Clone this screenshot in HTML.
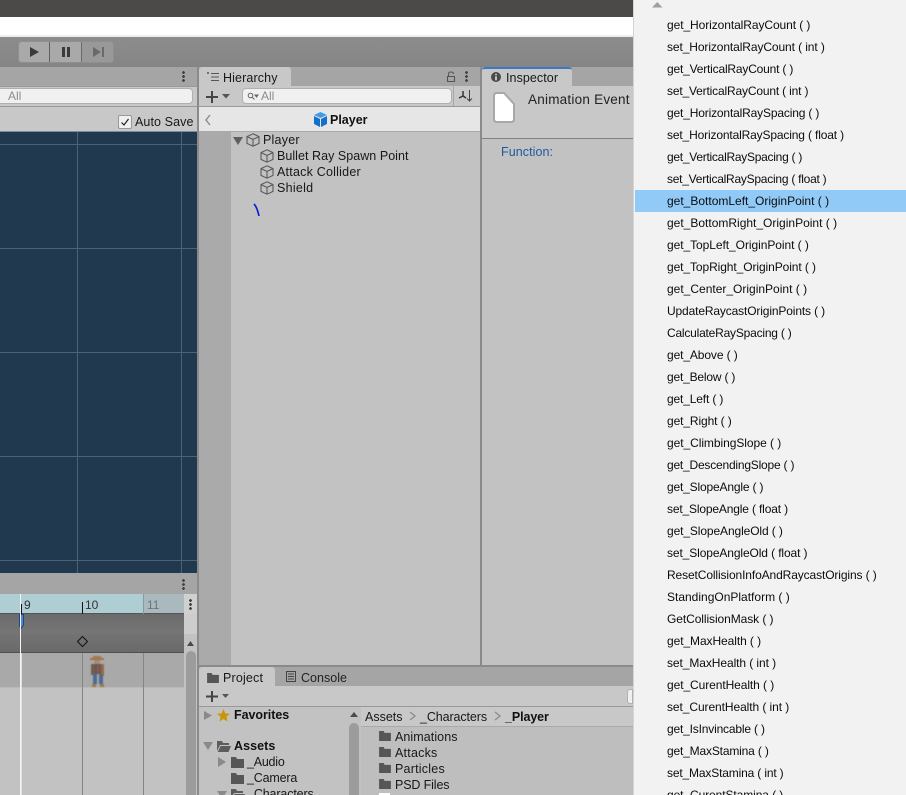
<!DOCTYPE html>
<html><head><meta charset="utf-8"><style>
html,body{margin:0;padding:0;width:906px;height:795px;overflow:hidden;background:#c2c2c2}
#r{position:relative;width:906px;height:795px;overflow:hidden;font-family:"Liberation Sans",sans-serif;font-size:12px;color:#1a1a1a}
.b{position:absolute}
.t{position:absolute;line-height:16px;height:16px;white-space:nowrap;font-size:12.5px;letter-spacing:.1px;color:#181818}
.m{position:absolute;left:667px;line-height:22px;height:22px;white-space:nowrap;color:#0c0c0c;letter-spacing:-.1px}
svg{position:absolute;overflow:visible}
</style></head><body><div id="r">
<svg width="0" height="0" style="left:0;top:0"><defs>
<symbol id="cube" viewBox="0 0 14 14"><path d="M7 .8 13 3.600V10.400L7 13.200 1 10.400V3.600ZM1 3.600 7 6.400 13 3.600M7 6.400V13.200" fill="none" stroke="#5a5a5a" stroke-width="1.100"/></symbol>
<symbol id="folder" viewBox="0 0 13 11"><path d="M0 0H5L6 2H13V11H0Z" fill="#565656"/></symbol>
<symbol id="ofolder" viewBox="0 0 14 11"><path d="M0 0H5L6 2H12V4H3L0 10ZM3.500 5H14L11.500 11H.8Z" fill="#5c5c5c"/></symbol>
</defs></svg>

<!-- top -->
<div class="b" style="left:0;top:0;width:906px;height:17px;background:#4b4a48"></div>
<div class="b" style="left:0;top:17px;width:906px;height:18px;background:#fff"></div>
<div class="b" style="left:0;top:35px;width:906px;height:2px;background:#efefef"></div>
<div class="b" style="left:0;top:37px;width:906px;height:30px;background:linear-gradient(#8c8c8c,#858585)"></div>
<!-- play buttons -->
<div class="b" style="left:18px;top:41px;width:96px;height:22px;background:#8f8f8f;border-radius:3px"></div>
<div class="b" style="left:19px;top:42px;width:30px;height:20px;background:#a9a9a9;border-radius:3px 0 0 3px;border-right:1px solid #5f5f5f"></div>
<div class="b" style="left:50px;top:42px;width:31px;height:20px;background:#a9a9a9;border-right:1px solid #6a6a6a"></div>
<div class="b" style="left:82px;top:42px;width:31px;height:20px;background:#999;border-radius:0 3px 3px 0"></div>
<svg style="left:0;top:0" width="120" height="70"><path d="M30 47 39 52 30 57Z" fill="#3a3a3a"/><path d="M62 47h3v10h-3zM67 47h3v10h-3z" fill="#3a3a3a"/><path d="M93 47 101 52 93 57ZM102 47h2v10h-2z" fill="#6a6a6a"/></svg>

<!-- left panel -->
<div class="b" style="left:0;top:67px;width:197px;height:19px;background:#a5a5a5"></div>
<div class="b" style="left:182px;top:71px;width:3px;height:11px;background:radial-gradient(circle at 50% 1.500px,#444 1.300px,transparent 1.500px) 0 0/3px 4px repeat-y"></div>
<div class="b" style="left:0;top:86px;width:197px;height:21px;background:#c8c8c8;border-top:1px solid #999;border-bottom:1px solid #999;box-sizing:border-box"></div>
<div class="b" style="left:-10px;top:88px;width:203px;height:16px;background:#f0f0f0;border:1px solid #b0b0b0;border-radius:4px;box-sizing:border-box"></div>
<div class="t" style="left:8px;top:88px;color:#8c8c8c;font-size:12px;letter-spacing:0">All</div>
<div class="b" style="left:0;top:107px;width:197px;height:25px;background:#c8c8c8"></div>
<div class="b" style="left:118px;top:115px;width:14px;height:14px;background:#f0f0f0;border:1px solid #999;border-radius:2px;box-sizing:border-box"></div>
<svg style="left:118px;top:115px" width="14" height="14"><path d="M3.500 7.500 6 10 10.500 4" fill="none" stroke="#222" stroke-width="1.200"/></svg>
<div class="t" style="left:135px;top:114px;letter-spacing:.1px">Auto Save</div>
<div class="b" style="left:0;top:131px;width:197px;height:442px;background:#20394f"></div>
<div class="b" style="left:0;top:131px;width:197px;height:1px;background:#7f8a94"></div>
<div class="b" style="left:77px;top:132px;width:1px;height:441px;background:#4d6274"></div>
<div class="b" style="left:181px;top:132px;width:1px;height:441px;background:#4d6274"></div>
<div class="b" style="left:0;top:144px;width:197px;height:1px;background:#4d6274"></div>
<div class="b" style="left:0;top:248px;width:197px;height:1px;background:#4d6274"></div>
<div class="b" style="left:0;top:352px;width:197px;height:1px;background:#4d6274"></div>
<div class="b" style="left:0;top:456px;width:197px;height:1px;background:#4d6274"></div>
<div class="b" style="left:0;top:560px;width:197px;height:1px;background:#4d6274"></div>

<!-- animation -->
<div class="b" style="left:0;top:573px;width:197px;height:21px;background:#a5a5a5"></div>
<div class="b" style="left:182px;top:579px;width:3px;height:11px;background:radial-gradient(circle at 50% 1.500px,#444 1.300px,transparent 1.500px) 0 0/3px 4px repeat-y"></div>
<div class="b" style="left:0;top:594px;width:143px;height:20px;background:#afced3"></div>
<div class="b" style="left:143px;top:594px;width:41px;height:20px;background:#a9b9bd"></div>
<div class="b" style="left:184px;top:594px;width:13px;height:20px;background:#d0d0d0"></div>
<div class="b" style="left:189px;top:599px;width:3px;height:11px;background:radial-gradient(circle at 50% 1.500px,#444 1.300px,transparent 1.500px) 0 0/3px 4px repeat-y"></div>
<div class="b" style="left:0;top:613px;width:184px;height:1px;background:#555"></div>
<div class="b" style="left:21px;top:604px;width:1px;height:10px;background:#111"></div>
<div class="b" style="left:82px;top:602px;width:1px;height:12px;background:#111"></div>
<div class="b" style="left:143px;top:594px;width:1px;height:20px;background:#889a9e"></div>
<div class="t" style="left:24px;top:597px;font-size:12px;letter-spacing:0;color:#333">9</div>
<div class="t" style="left:85px;top:597px;font-size:12px;letter-spacing:0;color:#333">10</div>
<div class="t" style="left:147px;top:597px;font-size:12px;letter-spacing:0;color:#6b7578">11</div>
<div class="b" style="left:0;top:614px;width:184px;height:20px;background:linear-gradient(#6b6b6b,#767676)"></div>
<div class="b" style="left:0;top:634px;width:184px;height:18px;background:linear-gradient(#737373,#6a6a6a)"></div>
<div class="b" style="left:0;top:652px;width:184px;height:1px;background:#4f4f4f"></div>
<div class="b" style="left:0;top:653px;width:184px;height:142px;background:#c2c2c2"></div>
<div class="b" style="left:0;top:653px;width:184px;height:35px;background:#a9a9a9;border-bottom:1px solid #b9b9b9;box-sizing:border-box"></div>
<div class="b" style="left:82px;top:653px;width:1px;height:142px;background:#858585"></div>
<div class="b" style="left:143px;top:653px;width:1px;height:142px;background:#858585"></div>
<div class="b" style="left:20px;top:594px;width:1px;height:201px;background:#f5f5f5"></div>
<div class="b" style="left:21px;top:653px;width:1px;height:142px;background:#e0e0e0"></div>
<svg style="left:0;top:610px" width="190" height="50"><path d="M19.500 4.500H23.500V15L21.500 18 19.500 16Z" fill="#3f8be8" stroke="#17305a" stroke-width=".7"/><path d="M20 4H21V20H20Z" fill="#f5f5f5"/><path d="M82.500 26.500 87.500 31.500 82.500 36.500 77.500 31.500Z" fill="none" stroke="#111" stroke-width="1"/></svg>
<div class="b" style="left:184px;top:614px;width:13px;height:181px;background:#c2c2c2"></div>
<div class="b" style="left:184px;top:614px;width:13px;height:20px;background:#cdcdcd"></div>
<div class="b" style="left:186px;top:651px;width:10px;height:144px;background:#9c9c9c;border-radius:5px 5px 0 0"></div>
<svg style="left:184px;top:640px" width="13" height="10"><path d="M3 6H10L6.500 1Z" fill="#4a4a4a"/></svg>
<!-- sprite -->
<svg style="left:89px;top:655px;filter:blur(.5px);opacity:.85" width="20" height="34">
<rect x="1" y="3" width="14" height="2" fill="#9c6a3c"/><rect x="4" y="1" width="8" height="3" fill="#a8703e"/><rect x="5" y="5" width="6" height="4" fill="#a08a78"/>
<rect x="2" y="9" width="4" height="11" fill="#6a5040"/><rect x="6" y="9" width="6" height="10" fill="#5e4a3a"/><rect x="12" y="9" width="3" height="12" fill="#94603c"/><rect x="8" y="10" width="2" height="8" fill="#8a4c4c"/>
<rect x="4" y="19" width="4" height="10" fill="#3f628f"/><rect x="10" y="19" width="4" height="10" fill="#3f628f"/><rect x="3" y="29" width="4" height="3" fill="#a0703e"/><rect x="11" y="29" width="4" height="3" fill="#a0703e"/>
</svg>

<div class="b" style="left:197px;top:67px;width:2px;height:728px;background:#8a8a8a"></div>

<!-- hierarchy -->
<div class="b" style="left:199px;top:67px;width:281px;height:19px;background:#a5a5a5"></div>
<div class="b" style="left:199px;top:67px;width:92px;height:20px;background:#c8c8c8;border-radius:3px 3px 0 0"></div>
<svg style="left:207px;top:72px" width="14" height="11"><path d="M0 1H2M1 0V2M4 1.500H12M4 5H12M4 8.500H12" stroke="#555" stroke-width="1" fill="none"/></svg>
<div class="t" style="left:223px;top:70px;letter-spacing:.12px">Hierarchy</div>
<svg style="left:446px;top:71px" width="10" height="12"><path d="M1.500 5.500H8.500V10.500H1.500ZM2.500 5.500V3Q2.500 1 5 1T7.500 3" fill="none" stroke="#555" stroke-width="1.100"/></svg>
<div class="b" style="left:465px;top:71px;width:3px;height:11px;background:radial-gradient(circle at 50% 1.500px,#444 1.300px,transparent 1.500px) 0 0/3px 4px repeat-y"></div>
<div class="b" style="left:199px;top:86px;width:281px;height:21px;background:#c8c8c8;border-bottom:1px solid #999;box-sizing:border-box"></div>
<svg style="left:205px;top:89px" width="26" height="14"><path d="M7 2V14M1 8H13" stroke="#444" stroke-width="2"/><path d="M17 5H25L21 9.500Z" fill="#555"/></svg>
<div class="b" style="left:242px;top:88px;width:210px;height:16px;background:#f0f0f0;border:1px solid #b0b0b0;border-radius:4px;box-sizing:border-box"></div>
<svg style="left:247px;top:92px" width="12" height="9"><circle cx="3.500" cy="3.500" r="2.300" fill="none" stroke="#666"/><path d="M5 5 7.500 7.500M8 3H11L9.500 5Z" stroke="#666" fill="#666"/></svg>
<div class="t" style="left:261px;top:88px;color:#8c8c8c;font-size:12px;letter-spacing:0">All</div>
<div class="b" style="left:453px;top:86px;width:1px;height:20px;background:#a8a8a8"></div>
<svg style="left:458px;top:89px" width="16" height="14"><path d="M1 9 5 7M8 9 5 7M5 7V2" stroke="#333" stroke-width="1.500" fill="none"/><path d="M11.500 1V12M9 9.500 11.500 12 14 9.500" stroke="#444" fill="none"/></svg>
<div class="b" style="left:199px;top:107px;width:281px;height:25px;background:#e6e6e6;border-bottom:1px solid #aaa;box-sizing:border-box"></div>
<svg style="left:204px;top:114px" width="8" height="12"><path d="M6 1 2 6 6 11" fill="none" stroke="#8a8a8a" stroke-width="1.400"/></svg>
<svg style="left:313px;top:112px" width="15" height="15"><path d="M7.500 0 14 3 7.500 6 1 3Z" fill="#3d9bea"/><path d="M1 4 7 7V15L1 12Z" fill="#1570cc"/><path d="M14 4 8 7V15L14 12Z" fill="#1570cc"/></svg>
<div class="t" style="left:330px;top:112px;font-weight:bold;letter-spacing:0;color:#111">Player</div>
<div class="b" style="left:199px;top:132px;width:32px;height:533px;background:#aaaaaa"></div>
<div class="b" style="left:231px;top:132px;width:249px;height:533px;background:#c2c2c2"></div>
<svg style="left:233px;top:136px" width="11" height="10"><path d="M0 1H10L5 9Z" fill="#5f5f5f"/></svg>
<svg style="left:246px;top:133px" width="14" height="14"><use href="#cube"/></svg>
<div class="t" style="left:263px;top:132px;letter-spacing:.22px">Player</div>
<svg style="left:260px;top:149px" width="14" height="14"><use href="#cube"/></svg>
<div class="t" style="left:277px;top:148px;letter-spacing:.04px">Bullet Ray Spawn Point</div>
<svg style="left:260px;top:165px" width="14" height="14"><use href="#cube"/></svg>
<div class="t" style="left:277px;top:164px;letter-spacing:.22px">Attack Collider</div>
<svg style="left:260px;top:181px" width="14" height="14"><use href="#cube"/></svg>
<div class="t" style="left:277px;top:180px;letter-spacing:.27px">Shield</div>
<svg style="left:252px;top:203px" width="10" height="14"><path d="M2 1 Q5 4 7 13" stroke="#0c1fd0" stroke-width="1.700" fill="none"/></svg>

<div class="b" style="left:480px;top:67px;width:2px;height:600px;background:#8a8a8a"></div>

<!-- inspector -->
<div class="b" style="left:482px;top:67px;width:151px;height:19px;background:#a5a5a5"></div>
<div class="b" style="left:482px;top:67px;width:90px;height:20px;background:#c8c8c8;border-radius:3px 3px 0 0;border-top:2px solid #3d78c8;box-sizing:border-box"></div>
<svg style="left:491px;top:72px" width="10" height="10"><circle cx="5" cy="5" r="5" fill="#4a4a4a"/><rect x="4.200" y="4.300" width="1.600" height="4" fill="#ddd"/><rect x="4.200" y="1.800" width="1.600" height="1.500" fill="#ddd"/></svg>
<div class="t" style="left:506px;top:70px;letter-spacing:.07px">Inspector</div>
<div class="b" style="left:482px;top:86px;width:151px;height:53px;background:#c8c8c8;border-bottom:1px solid #808080;box-sizing:border-box"></div>
<div class="b" style="left:482px;top:139px;width:151px;height:528px;background:#c2c2c2"></div>
<svg style="left:493px;top:92px" width="22" height="31"><path d="M4 1H11L21 12V27Q21 30 18 30H4Q1 30 1 27V4Q1 1 4 1Z" fill="#fff" stroke="#a8a8a8" stroke-width="2"/></svg>
<div class="t" style="left:528px;top:92px;font-size:13.5px;letter-spacing:.23px;color:#222">Animation Event</div>
<div class="t" style="left:501px;top:144px;color:#1d5a9c;letter-spacing:.07px">Function:</div>

<!-- project -->
<div class="b" style="left:199px;top:665px;width:434px;height:2px;background:#8a8a8a"></div>
<div class="b" style="left:199px;top:667px;width:434px;height:19px;background:#a5a5a5"></div>
<div class="b" style="left:199px;top:667px;width:76px;height:20px;background:#c8c8c8;border-radius:3px 3px 0 0"></div>
<svg style="left:207px;top:673px" width="12" height="10"><use href="#folder"/></svg>
<div class="t" style="left:223px;top:670px;letter-spacing:.17px">Project</div>
<svg style="left:286px;top:671px" width="10" height="12"><path d="M.5.500H9.500V10.500H.5ZM2 3H8M2 5.500H8M2 8H8" fill="none" stroke="#444"/></svg>
<div class="t" style="left:301px;top:670px;letter-spacing:.02px;color:#222">Console</div>
<div class="b" style="left:199px;top:686px;width:434px;height:21px;background:#c8c8c8;border-bottom:1px solid #999;box-sizing:border-box"></div>
<svg style="left:205px;top:690px" width="26" height="14"><path d="M7 1V12M1 6.500H13" stroke="#444" stroke-width="2"/><path d="M17 4H24L20.500 8Z" fill="#555"/></svg>
<div class="b" style="left:627px;top:689px;width:6px;height:15px;background:#f0f0f0;border-radius:3px 0 0 3px;border:1px solid #b0b0b0;box-sizing:border-box"></div>
<div class="b" style="left:199px;top:707px;width:148px;height:88px;background:#c2c2c2"></div>
<div class="b" style="left:347px;top:707px;width:14px;height:88px;background:#c2c2c2"></div>
<div class="b" style="left:349px;top:723px;width:10px;height:72px;background:#9c9c9c;border-radius:5px 5px 0 0"></div>
<svg style="left:348px;top:711px" width="13" height="8"><path d="M2 6H10L6 1Z" fill="#4a4a4a"/></svg>
<div class="b" style="left:361px;top:707px;width:272px;height:88px;background:#bebebe"></div>
<div class="b" style="left:361px;top:707px;width:272px;height:20px;background:#c8c8c8;border-bottom:1px solid #aaa;box-sizing:border-box"></div>
<svg style="left:204px;top:710px" width="11" height="11"><path d="M0 1 8 5.500 0 10Z" fill="#8a8a8a"/></svg>
<svg style="left:217px;top:709px" width="13" height="13"><path d="M6.500 0 8.300 4.400 13 4.800 9.400 7.800 10.500 12.500 6.500 10 2.500 12.500 3.600 7.800 0 4.800 4.700 4.400Z" fill="#c99606"/></svg>
<div class="t" style="left:234px;top:707px;font-weight:bold;letter-spacing:-.05px;color:#111">Favorites</div>
<svg style="left:203px;top:741px" width="11" height="10"><path d="M0 1H10L5 9Z" fill="#8a8a8a"/></svg>
<svg style="left:217px;top:741px" width="14" height="11"><use href="#ofolder"/></svg>
<div class="t" style="left:234px;top:738px;font-weight:bold;letter-spacing:.07px;color:#111">Assets</div>
<svg style="left:218px;top:757px" width="9" height="10"><path d="M0 0 8 5 0 10Z" fill="#8a8a8a"/></svg>
<svg style="left:231px;top:757px" width="13" height="11"><use href="#folder"/></svg>
<div class="t" style="left:247px;top:754px;letter-spacing:-.23px">_Audio</div>
<svg style="left:231px;top:773px" width="13" height="11"><use href="#folder"/></svg>
<div class="t" style="left:247px;top:770px;letter-spacing:-.18px">_Camera</div>
<svg style="left:217px;top:790px" width="11" height="10"><path d="M0 1H10L5 9Z" fill="#8a8a8a"/></svg>
<svg style="left:231px;top:789px" width="14" height="11"><use href="#ofolder"/></svg>
<div class="t" style="left:247px;top:786px;letter-spacing:-.13px">_Characters</div>
<div class="t" style="left:365px;top:709px;letter-spacing:0">Assets</div>
<svg style="left:409px;top:711px" width="8" height="10"><path d="M1 1 6 5 1 9" fill="none" stroke="#8a8a8a" stroke-width="1.300"/></svg>
<div class="t" style="left:420px;top:709px;letter-spacing:-.1px">_Characters</div>
<svg style="left:494px;top:711px" width="8" height="10"><path d="M1 1 6 5 1 9" fill="none" stroke="#8a8a8a" stroke-width="1.300"/></svg>
<div class="t" style="left:505px;top:709px;font-weight:bold;letter-spacing:-.1px;color:#111">_Player</div>
<svg style="left:379px;top:731px" width="12" height="10"><use href="#folder"/></svg>
<div class="t" style="left:395px;top:729px;letter-spacing:.07px">Animations</div>
<svg style="left:379px;top:747px" width="12" height="10"><use href="#folder"/></svg>
<div class="t" style="left:395px;top:745px;letter-spacing:.22px">Attacks</div>
<svg style="left:379px;top:763px" width="12" height="10"><use href="#folder"/></svg>
<div class="t" style="left:395px;top:761px;letter-spacing:.22px">Particles</div>
<svg style="left:379px;top:779px" width="12" height="10"><use href="#folder"/></svg>
<div class="t" style="left:395px;top:777px;letter-spacing:-.13px">PSD Files</div>
<div class="b" style="left:379px;top:793px;width:11px;height:2px;background:#fff"></div>

<!-- menu -->
<div class="b" style="left:633px;top:0;width:273px;height:795px;background:#f2f2f2;border-left:1px solid #d4d4d4;box-sizing:border-box"></div>
<svg style="left:652px;top:2px" width="11" height="6"><path d="M0 5.500H10.500L5.250 0Z" fill="#a0a0a0"/></svg>
<div class="b" style="left:635px;top:190px;width:271px;height:22px;background:#91c9f7"></div>
<div class="m" style="top:14px;letter-spacing:-.08px">get_HorizontalRayCount ( )</div>
<div class="m" style="top:36px;letter-spacing:-.1px">set_HorizontalRayCount ( int )</div>
<div class="m" style="top:58px;letter-spacing:-.19px">get_VerticalRayCount ( )</div>
<div class="m" style="top:80px;letter-spacing:-.17px">set_VerticalRayCount ( int )</div>
<div class="m" style="top:102px;letter-spacing:-.16px">get_HorizontalRaySpacing ( )</div>
<div class="m" style="top:124px;letter-spacing:-.15px">set_HorizontalRaySpacing ( float )</div>
<div class="m" style="top:146px;letter-spacing:-.27px">get_VerticalRaySpacing ( )</div>
<div class="m" style="top:168px;letter-spacing:-.25px">set_VerticalRaySpacing ( float )</div>
<div class="m" style="top:190px;letter-spacing:0">get_BottomLeft_OriginPoint ( )</div>
<div class="m" style="top:212px;letter-spacing:0">get_BottomRight_OriginPoint ( )</div>
<div class="m" style="top:234px;letter-spacing:-.06px">get_TopLeft_OriginPoint ( )</div>
<div class="m" style="top:256px;letter-spacing:-.09px">get_TopRight_OriginPoint ( )</div>
<div class="m" style="top:278px;letter-spacing:0">get_Center_OriginPoint ( )</div>
<div class="m" style="top:300px;letter-spacing:-.14px">UpdateRaycastOriginPoints ( )</div>
<div class="m" style="top:322px;letter-spacing:-.21px">CalculateRaySpacing ( )</div>
<div class="m" style="top:344px;letter-spacing:-.11px">get_Above ( )</div>
<div class="m" style="top:366px;letter-spacing:-.19px">get_Below ( )</div>
<div class="m" style="top:388px;letter-spacing:-.15px">get_Left ( )</div>
<div class="m" style="top:410px;letter-spacing:-.11px">get_Right ( )</div>
<div class="m" style="top:432px;letter-spacing:-.06px">get_ClimbingSlope ( )</div>
<div class="m" style="top:454px;letter-spacing:-.21px">get_DescendingSlope ( )</div>
<div class="m" style="top:476px;letter-spacing:-.17px">get_SlopeAngle ( )</div>
<div class="m" style="top:498px;letter-spacing:-.16px">set_SlopeAngle ( float )</div>
<div class="m" style="top:520px;letter-spacing:-.11px">get_SlopeAngleOld ( )</div>
<div class="m" style="top:542px;letter-spacing:-.11px">set_SlopeAngleOld ( float )</div>
<div class="m" style="top:564px;letter-spacing:-.115px">ResetCollisionInfoAndRaycastOrigins ( )</div>
<div class="m" style="top:586px;letter-spacing:0">StandingOnPlatform ( )</div>
<div class="m" style="top:608px;letter-spacing:-.08px">GetCollisionMask ( )</div>
<div class="m" style="top:630px;letter-spacing:-.08px">get_MaxHealth ( )</div>
<div class="m" style="top:652px;letter-spacing:-.08px">set_MaxHealth ( int )</div>
<div class="m" style="top:674px;letter-spacing:-.08px">get_CurentHealth ( )</div>
<div class="m" style="top:696px;letter-spacing:-.08px">set_CurentHealth ( int )</div>
<div class="m" style="top:718px;letter-spacing:-.18px">get_IsInvincable ( )</div>
<div class="m" style="top:740px;letter-spacing:-.17px">get_MaxStamina ( )</div>
<div class="m" style="top:762px;letter-spacing:-.16px">set_MaxStamina ( int )</div>
<div class="m" style="top:784px;letter-spacing:-.09px">get_CurentStamina ( )</div>
</div></body></html>
